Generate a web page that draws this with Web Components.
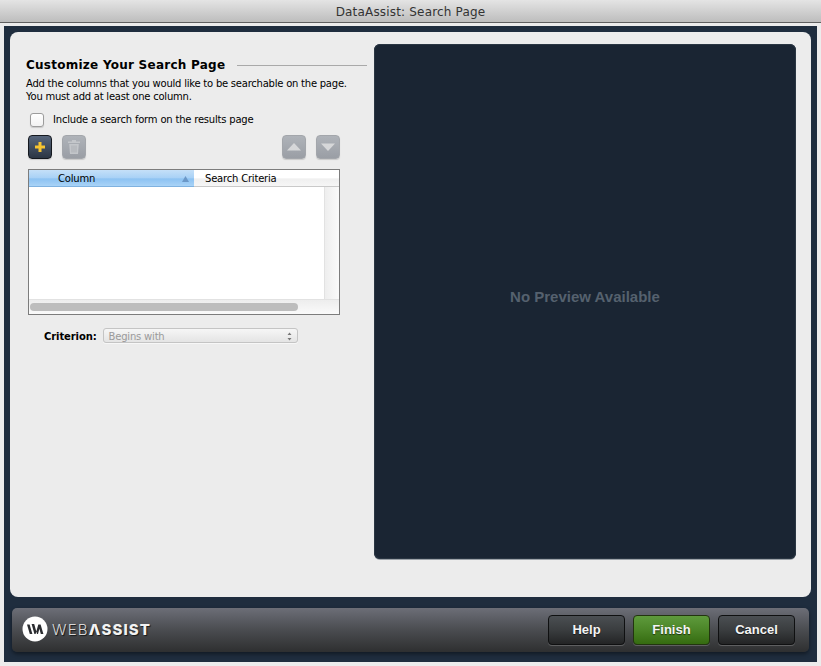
<!DOCTYPE html>
<html>
<head>
<meta charset="utf-8">
<title>DataAssist: Search Page</title>
<style>
html, body { margin: 0; padding: 0; background: #ececec; }
body { width: 821px; height: 666px; overflow: hidden; font-family: "DejaVu Sans", "Liberation Sans", sans-serif; }
</style>
</head>
<body>
<da-window heading="DataAssist: Search Page">
  <da-search-form></da-search-form>
  <da-preview>No Preview Available</da-preview>
  <da-footer slot="footer">
    <da-logo></da-logo>
    <da-action slot="actions">Help</da-action>
    <da-action slot="actions" kind="primary">Finish</da-action>
    <da-action slot="actions">Cancel</da-action>
  </da-footer>
</da-window>

<script>
// small helper, every element below just hands its markup to this
class DaBase extends HTMLElement {
  constructor(markup) {
    super();
    this.attachShadow({mode: 'open'}).innerHTML = markup;
  }
}

customElements.define('da-window', class extends DaBase {
  constructor() {
    super(`
      <style>
        :host { display: flex; flex-direction: column; height: 666px; }
        .title {
          height: 22px; line-height: 24px; text-align: center; flex: none;
          font-size: 12px; letter-spacing: .18px; color: #333;
          background: linear-gradient(#e4e4e4, #bdbdbd);
          border-bottom: 1px solid #5f5f5f;
        }
        .frame {
          margin: 3px 4px 4px 4px; flex: 1; display: flex; flex-direction: column;
          background: #1f2d3e; padding: 6px 6px 0 6px;
        }
        .panel {
          height: 565px; box-sizing: border-box; flex: none; background: #ececec; border-radius: 8px;
          display: flex; padding: 12px 15px 38px 16px;
        }
        .foot { padding: 11px 2px 0 2px; }
      </style>
      <div class="title"></div>
      <div class="frame">
        <div class="panel"><slot></slot></div>
        <div class="foot"><slot name="footer"></slot></div>
      </div>`);
    this.shadowRoot.querySelector('.title').textContent = this.getAttribute('heading');
  }
});

customElements.define('da-icon-button', class extends DaBase {
  constructor() {
    super(`
      <style>
        :host { display: block; width: 24px; height: 24px; }
        div {
          width: 24px; height: 24px; box-sizing: border-box; border-radius: 4px;
          display: flex; align-items: center; justify-content: center;
          background: linear-gradient(#afb3b9, #9a9ea5);
          border: 1px solid #a3a6ab; box-shadow: 0 1px 1px rgba(0,0,0,.15);
        }
        :host([active]) div {
          background: linear-gradient(#56657b, #2c3644);
          border-color: #14181e;
        }
      </style>
      <div><slot></slot></div>`);
  }
});

customElements.define('da-table', class extends DaBase {
  constructor() {
    super(`
      <style>
        :host { display: block; width: 312px; height: 146px; box-sizing: border-box; border: 1px solid #7c7c7c; background: #fff; color: #000; font-size: 10px; letter-spacing: -.2px; }
        .head { display: flex; height: 17px; line-height: 17px; }
        .col {
          width: 165px; box-sizing: border-box; padding-left: 29px; position: relative;
          background: linear-gradient(#c5e0f8 0, #a8d1f6 50%, #8cc2f2 55%, #a9d3f7 100%);
          border-bottom: 1px solid #7fb2e0;
        }
        .col svg { position: absolute; left: 153px; top: 6px; }
        .crit {
          flex: 1; padding-left: 11px;
          background: linear-gradient(#fff 0, #fff 50%, #efefef 55%, #f6f6f6 100%);
          border-bottom: 1px solid #c9c9c9;
        }
        .body { display: flex; height: 112px; }
        .rows { flex: 1; }
        .vtrack { width: 15px; background: linear-gradient(90deg, #eee, #fafafa); border-left: 1px solid #e2e2e2; box-sizing: border-box; }
        .htrack { height: 15px; box-sizing: border-box; display: flex; align-items: center; padding: 0 0 0 1px; background: linear-gradient(#ededed, #fafafa); border-top: 1px solid #e2e2e2; }
        .thumb { width: 268px; height: 8px; border-radius: 4px; background: #bdbdbd; }
      </style>
      <div class="head">
        <div class="col">Column<svg width="7" height="6"><path d="M3.500 0L7 6H0Z" fill="#6b98c8"/></svg></div>
        <div class="crit">Search Criteria</div>
      </div>
      <div class="body"><div class="rows"></div><div class="vtrack"></div></div>
      <div class="htrack"><div class="thumb"></div></div>`);
  }
});

customElements.define('da-select', class extends DaBase {
  constructor() {
    super(`
      <style>
        :host { display: flex; align-items: center; justify-content: space-between; box-sizing: border-box; width: 195px; height: 15px; padding: 1px 5px 0; border: 1px solid #c4c4c4; border-radius: 3px; background: linear-gradient(#f6f6f6, #e4e4e4); color: #9a9a9a; font-size: 10px; font-weight: normal; letter-spacing: -.2px; box-shadow: 0 1px 0 rgba(255,255,255,.6); }
        svg { display: block; }
      </style>
      <slot></slot>
      <svg width="5" height="9"><path d="M2.5 0.5L4.5 3H.5Z M2.5 8.5L4.5 6H.5Z" fill="#777"/></svg>`);
  }
});

customElements.define('da-search-form', class extends DaBase {
  constructor() {
    super(`
      <style>
        :host { display: block; width: 341px; flex: none; margin-right: 7px; color: #000; }
        .head { display: flex; align-items: center; gap: 12px; height: 16px; margin-top: 13px; }
        h1 { margin: 0; font: bold 12px "DejaVu Sans", sans-serif; white-space: nowrap; letter-spacing: .25px; }
        .rule { flex: 1; height: 1px; background: #a9a9a9; }
        p { margin: 4px 0 0; font-size: 10px; line-height: 13px; white-space: nowrap; letter-spacing: -.23px; }
        .check { display: flex; align-items: center; gap: 10px; margin: 9px 0 0 4px; font-size: 10px; height: 16px; letter-spacing: -.2px; }
        .check span { margin: -2px 0 0 -1px; }
        .box { width: 14px; height: 14px; box-sizing: border-box; border-radius: 3px; border: 1px solid #9c9c9c; background: linear-gradient(#fff, #f2f2f2); box-shadow: 0 1px 1px rgba(0,0,0,.15); }
        .tools { display: flex; gap: 10px; margin: 7px 0 10px 2px; width: 312px; }
        .tools .gap { flex: 1; }
        da-table { margin-left: 2px; }
        .crit { display: flex; align-items: center; gap: 6px; margin: 13px 0 0 18px; font: bold 10px "DejaVu Sans", sans-serif; letter-spacing: -.1px; }
        .crit span { padding-top: 2px; }
      </style>
      <div class="head"><h1>Customize Your Search Page</h1><div class="rule"></div></div>
      <p>Add the columns that you would like to be searchable on the page.<br>You must add at least one column.</p>
      <div class="check"><div class="box"></div><span>Include a search form on the results page</span></div>
      <div class="tools">
        <da-icon-button active><svg width="12" height="12"><path d="M4.5 1h3v3.5H11v3H7.500V11h-3V7.500H1v-3h3.500z" fill="#f6c431"/></svg></da-icon-button>
        <da-icon-button><svg width="14" height="16"><path d="M1 2.500h12V4H1z M5 1h4v1.500H5z" fill="#c3c6ca"/><path d="M2.200 5h9.600l-.8 10H3z" fill="#c3c6ca"/><path d="M5 6.500v7M7 6.500v7M9 6.500v7" stroke="#a6a9ae" stroke-width=".8"/></svg></da-icon-button>
        <div class="gap"></div>
        <da-icon-button><svg width="14" height="8"><path d="M7 0L14 7.500H0Z" fill="#d6d7d9"/></svg></da-icon-button>
        <da-icon-button><svg width="14" height="8"><path d="M0 .5H14L7 8Z" fill="#d6d7d9"/></svg></da-icon-button>
      </div>
      <da-table></da-table>
      <div class="crit"><span>Criterion:</span><da-select>Begins with</da-select></div>`);
  }
});

customElements.define('da-preview', class extends DaBase {
  constructor() {
    super(`
      <style>
        :host {
          display: flex; align-items: center; justify-content: center; flex: 1; box-sizing: border-box; height: 515px; padding-bottom: 10px;
          background: #1a2533; border-radius: 6px; color: #55616e; font: bold 15px "Liberation Sans", sans-serif;
          box-shadow: 0 1px 0 #9da3a9, inset 0 0 0 1px #2a3643; align-self: flex-start;
        }
      </style>
      <slot></slot>`);
  }
});

customElements.define('da-footer', class extends DaBase {
  constructor() {
    super(`
      <style>
        :host {
          display: flex; align-items: center; justify-content: space-between; height: 44px;
          padding: 0 14px 0 10px; border-radius: 5px;
          background: linear-gradient(#6c6e77, #4a4c50 50%, #2e2f30);
          box-shadow: 0 2px 4px rgba(0,0,0,.45);
        }
        .actions { display: flex; gap: 8px; margin-top: 0; }
      </style>
      <slot></slot>
      <div class="actions"><slot name="actions"></slot></div>`);
  }
});

customElements.define('da-action', class extends DaBase {
  constructor() {
    super(`
      <style>
        :host {
          display: flex; align-items: center; justify-content: center; width: 77px; height: 30px; box-sizing: border-box; padding-bottom: 2px;
          border: 1px solid #0f1011; border-radius: 4px; color: #f4f4f4; font: bold 13px "Liberation Sans", sans-serif;
          background: linear-gradient(#4b4f53, #3a3d3f 50%, #232425);
          box-shadow: 0 1px 0 rgba(255,255,255,.2);
          text-shadow: 0 1px 1px rgba(0,0,0,.6);
        }
        :host([kind=primary]) { background: linear-gradient(#5e9a3c, #4b8527 50%, #356b10); border-color: #22350f; }
      </style>
      <slot></slot>`);
  }
});

customElements.define('da-logo', class extends DaBase {
  constructor() {
    super(`
      <style>
        :host { display: flex; align-items: center; gap: 4px; color: #ededed; font: 15px Inter, "Liberation Sans", sans-serif; text-shadow: 1px 1px 1px rgba(0,0,0,.7); margin-top: -2px; }
        svg { display: block; }
        .web { font-weight: 300; color: #d8d8d8; letter-spacing: 1.2px; }
        .assist { font-weight: 800; color: #f2f2f2; letter-spacing: 1.1px; }
      </style>
      <svg width="26" height="26" viewBox="0 0 26 26">
        <circle cx="13" cy="13" r="12.500" fill="#fff"/>
        <path d="M5 8.500L7.800 18H10.400L7.600 8.500z M9.600 8L12.400 18H15L12.200 8z M13.600 18L16.300 8.500H18.600L21.400 18H18.800L17.400 12.800L16 18z" fill="#2a2c30"/>
      </svg>
      <span><span class="web">WEB</span><span class="assist">ΛSSIST</span></span>`);
  }
});
</script>
</body>
</html>
